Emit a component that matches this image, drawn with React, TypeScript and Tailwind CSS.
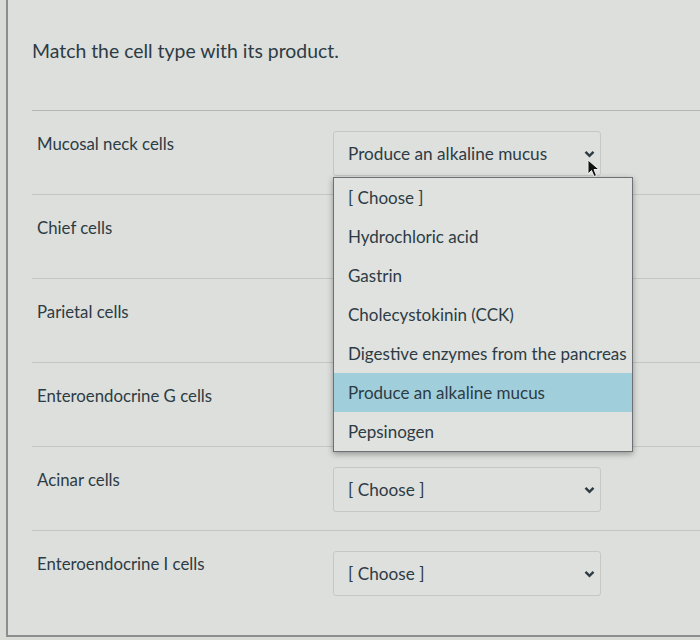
import React from 'react';

// rows 2-4 sit under the open listbox, so their selects are not drawn
const rows = [
  { label: 'Mucosal neck cells', value: 'Produce an alkaline mucus', open: true },
  { label: 'Chief cells', value: '[ Choose ]', hidden: true },
  { label: 'Parietal cells', value: '[ Choose ]', hidden: true },
  { label: 'Enteroendocrine G cells', value: '[ Choose ]', hidden: true },
  { label: 'Acinar cells', value: '[ Choose ]' },
  { label: 'Enteroendocrine I cells', value: '[ Choose ]' },
];

const options = [
  '[ Choose ]',
  'Hydrochloric acid',
  'Gastrin',
  'Cholecystokinin (CCK)',
  'Digestive enzymes from the pancreas',
  'Produce an alkaline mucus',
  'Pepsinogen',
];

const Chevron = () => (
  <svg width="11" height="8" viewBox="0 0 11 8" className="shrink-0">
    <path d="M1.5 1.8 L5.5 5.8 L9.5 1.8" fill="none" stroke="#2d3b45" strokeWidth="2.4" />
  </svg>
);

const Cursor = () => (
  <svg width="16" height="20" viewBox="0 0 16 20" className="absolute left-[254px] top-[48px] z-20">
    <path d="M1 1 L1 15 L4.5 11.5 L7 17.5 L9.5 16.5 L7 10.5 L12 10.5 Z" fill="#111" stroke="#eee" strokeWidth="1" />
  </svg>
);

const App: React.FC = () => {
  return (
    <div className="w-[700px] h-[640px] overflow-hidden bg-[#dadcd8] font-['Lato','Open_Sans',sans-serif] text-[#2d3b45]">
      <div className="ml-[6px] h-[637px] border-l-2 border-b-2 border-[#8a8e8c] bg-[#dcdfdb]">
        <div className="h-[111px] ml-[24px] border-b border-[#b3b7b3] pt-[37px]">
          <h1 className="text-[19.4px] leading-[28px]">Match the cell type with its product.</h1>
        </div>
        {rows.map((row, i) => (
          <div
            key={row.label}
            className={`h-[84px] ml-[24px] flex ${i < rows.length - 1 ? 'border-b border-[#c3c6c2]' : ''}`}
          >
            <div className="w-[301px] pl-[5px] pt-[23px] text-[16.8px] leading-[20px]">{row.label}</div>
            <div className="relative pt-[20px]">
              {!row.hidden && (
                <div className="w-[268px] h-[45px] border border-[#c5c8c4] rounded-[3px] bg-[#dde0dc] flex items-center justify-between pl-[14px] pr-[5px]">
                  <span className="text-[17.2px] pt-[1px]">{row.value}</span>
                  <Chevron />
                </div>
              )}
              {row.open && (
                <>
                  <Cursor />
                  <div className="absolute left-0 top-[66px] w-[300px] z-10 border border-[#6c7173] bg-[#dfe2de] shadow-[0_2px_6px_rgba(0,0,0,0.35)]">
                    {options.map((opt) => (
                      <div
                        key={opt}
                        className={`h-[39px] flex items-center pl-[14px] text-[17px] whitespace-nowrap ${
                          opt === row.value ? 'bg-[#a0cfdb]' : ''
                        }`}
                      >
                        {opt}
                      </div>
                    ))}
                  </div>
                </>
              )}
            </div>
          </div>
        ))}
      </div>
    </div>
  );
};

export default App;
